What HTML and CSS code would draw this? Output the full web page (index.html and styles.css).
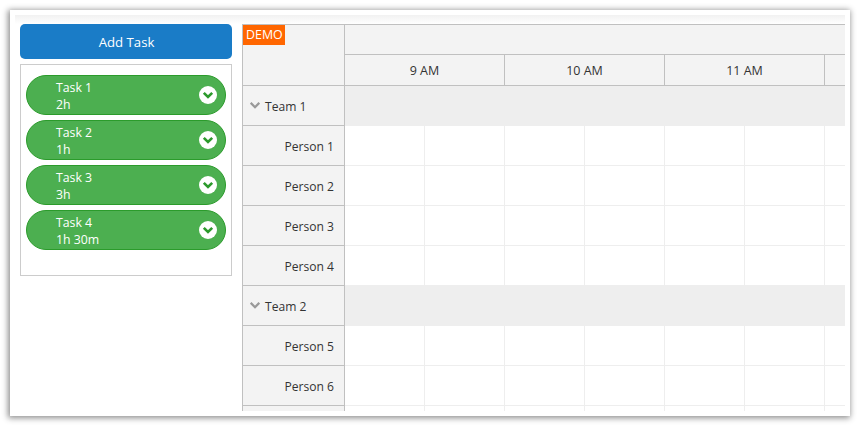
FILE: index.html
```html
<!DOCTYPE html>
<html lang="en">
<head>
<meta charset="utf-8">
<title>Scheduler</title>
<link rel="stylesheet" href="styles.css">
</head>
<body>
<div class="frame">
  <div class="fade"></div>
  <div class="content">
    <aside class="side">
      <button class="add">Add Task</button>
      <div class="list">
        <div class="task"><div class="task-text"><div>Task 1</div><div>2h</div></div><span class="chev"><svg width="18" height="18" viewBox="0 0 18 18"><circle cx="9" cy="9" r="9" fill="#fff"/><path d="M4.8 6.8 9 11l4.2-4.2" fill="none" stroke="#2c9a2c" stroke-width="2.6"/></svg></span></div>
        <div class="task"><div class="task-text"><div>Task 2</div><div>1h</div></div><span class="chev"><svg width="18" height="18" viewBox="0 0 18 18"><circle cx="9" cy="9" r="9" fill="#fff"/><path d="M4.8 6.8 9 11l4.2-4.2" fill="none" stroke="#2c9a2c" stroke-width="2.6"/></svg></span></div>
        <div class="task"><div class="task-text"><div>Task 3</div><div>3h</div></div><span class="chev"><svg width="18" height="18" viewBox="0 0 18 18"><circle cx="9" cy="9" r="9" fill="#fff"/><path d="M4.8 6.8 9 11l4.2-4.2" fill="none" stroke="#2c9a2c" stroke-width="2.6"/></svg></span></div>
        <div class="task"><div class="task-text"><div>Task 4</div><div>1h 30m</div></div><span class="chev"><svg width="18" height="18" viewBox="0 0 18 18"><circle cx="9" cy="9" r="9" fill="#fff"/><path d="M4.8 6.8 9 11l4.2-4.2" fill="none" stroke="#2c9a2c" stroke-width="2.6"/></svg></span></div>
      </div>
    </aside>
    <section class="sched">
      <div class="corner"><span class="demo">DEMO</span></div>
      <div class="head">
        <div class="head-top"></div>
        <div class="head-hours">
          <div class="hour">9 AM</div><div class="hour">10 AM</div><div class="hour">11 AM</div><div class="hour"></div>
        </div>
      </div>
      <div class="names">
        <div class="name team"><svg class="tw" width="10" height="7" viewBox="0 0 10 7"><path d="M.7.9 5 5.2 9.3.9" fill="none" stroke="#999" stroke-width="2.3"/></svg>Team 1</div>
        <div class="name">Person 1</div>
        <div class="name">Person 2</div>
        <div class="name">Person 3</div>
        <div class="name">Person 4</div>
        <div class="name team"><svg class="tw" width="10" height="7" viewBox="0 0 10 7"><path d="M.7.9 5 5.2 9.3.9" fill="none" stroke="#999" stroke-width="2.3"/></svg>Team 2</div>
        <div class="name">Person 5</div>
        <div class="name">Person 6</div>
        <div class="name"></div>
      </div>
      <div class="grid">
        <div class="band"></div>
        <div class="row"></div>
        <div class="row"></div>
        <div class="row"></div>
        <div class="row"></div>
        <div class="band"></div>
        <div class="row"></div>
        <div class="row"></div>
        <div class="row"></div>
      </div>
    </section>
  </div>
</div>
</body>
</html>
```
FILE: styles.css
```css
* { box-sizing: border-box; }
html, body { margin: 0; height: 100%; background: #fff; overflow: hidden; }
body { padding: 10px; font-family: "Open Sans", "Noto Sans", sans-serif; font-size: 12.1px; color: #333; }
.frame {
  width: 840px; height: 406px; background: #fff; padding: 5px 5px 0;
  box-shadow: -1px 1px 6px 1px rgba(0,0,0,.45);
}
.fade { height: 9px; background: linear-gradient(#f1f1f1, #fff); }
.content { display: flex; gap: 10px; padding-left: 5px; height: 387px; overflow: hidden; }
.side { width: 212px; flex: none; display: flex; flex-direction: column; gap: 5px; }
.add {
  height: 35px; border: 0; border-radius: 5px; background: #1a7cc7; color: #fff;
  font: 13.2px "Open Sans", "Noto Sans", sans-serif; padding: 0 0 0 1px;
}
.list { height: 212px; border: 1px solid #ccc; padding: 10px 5px; display: flex; flex-direction: column; gap: 5px; }
.task {
  height: 40px; border: 1px solid #2b9b2b; border-radius: 20px; background: #4caf50; color: #fff;
  display: flex; align-items: center; justify-content: space-between; padding: 1px 8px 0 29px;
  font-size: 12.3px; line-height: 17px;
}
.chev { display: flex; margin-top: -1px; }
.sched {
  width: 603px; flex: none; display: grid; grid-template-columns: 102px 501px; grid-template-rows: 61px 326px;
  border-top: 1px solid #c0c0c0; border-left: 1px solid #c0c0c0; height: 387px;
}
.corner { background: #f3f3f3; border-right: 1px solid #c0c0c0; border-bottom: 1px solid #c0c0c0; }
.demo { display: inline-block; background: #f60; color: #fff; font-size: 12.4px; line-height: 20px; padding: 0 2px 0 3px; }
.head { background: #f3f3f3; border-bottom: 1px solid #c0c0c0; display: flex; flex-direction: column; }
.head-top { height: 30px; border-bottom: 1px solid #c0c0c0; }
.head-hours { flex: 1; display: flex; }
.hour { width: 160px; flex: none; border-right: 1px solid #c0c0c0; display: flex; align-items: center; justify-content: center; font-size: 12.5px; }
.names { background: #f3f3f3; border-right: 1px solid #c0c0c0; }
.name {
  height: 40px; border-bottom: 1px solid #c0c0c0; display: flex; align-items: center; justify-content: flex-end; padding: 2px 10px 0 0;
}
.name.team { justify-content: flex-start; padding: 2px 0 0 7px; gap: 5px; }
.tw { margin-top: -3px; }
.grid { background: #fff; }
.band { height: 40px; background: #eee; }
.row {
  height: 40px; border-bottom: 1px solid #eee;
  background: repeating-linear-gradient(90deg, transparent 0 79px, #eee 79px 80px);
}
```
